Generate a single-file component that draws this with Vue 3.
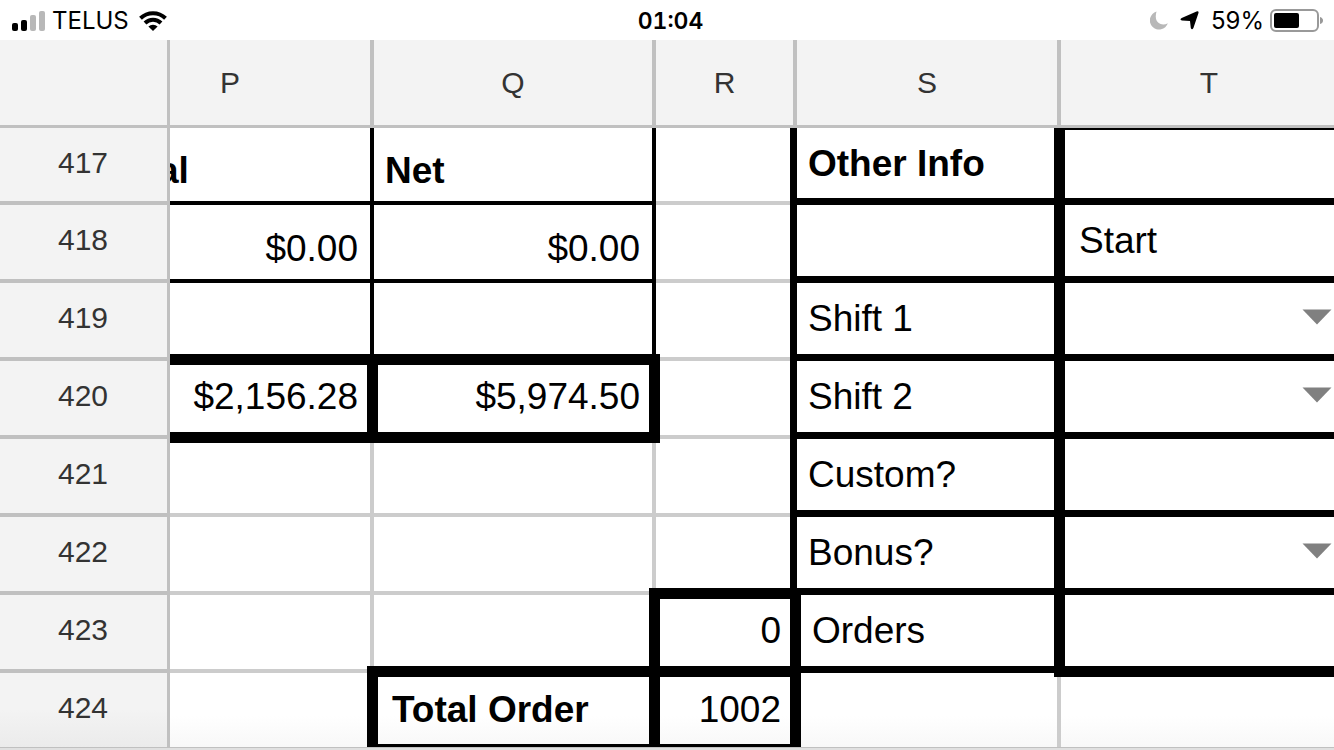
<template>
  <div class="screen">
    <header class="status-bar">
      <div class="status-side">
        <svg class="signal" width="34" height="20" viewBox="0 0 34 20" role="img" aria-label="Signal">
          <rect x="0" y="12" width="6" height="8" rx="2" />
          <rect x="9" y="9" width="6" height="11" rx="2" />
          <rect class="weak" x="18" y="4" width="6" height="16" rx="2" />
          <rect class="weak" x="27" y="0" width="6" height="20" rx="2" />
        </svg>
        <span>TELUS</span>
        <svg class="wifi" width="28" height="20" viewBox="0 0 28 20" role="img" aria-label="Wi-Fi">
          <path d="M1.500 7.200a18 18 0 0 1 25 0" />
          <path d="M6 12a11.500 11.500 0 0 1 16 0" />
          <path class="dot" d="M14 20l-4.600-4.400a6.600 6.600 0 0 1 9.200 0z" />
        </svg>
      </div>
      <span class="clock">01:04</span>
      <div class="status-side right">
        <svg class="moon" width="18" height="19" viewBox="0 0 18 19" role="img" aria-label="Do not disturb">
          <path d="M6.500 0.500q-2.500 9.500 3.500 12.300 4 1.700 7.800-.6a9.200 9.200 0 1 1-11.300-11.700z" />
        </svg>
        <svg class="location" width="19" height="19" viewBox="0 0 19 19" role="img" aria-label="Location">
          <path d="M16.500 0.400q2.600-.8 1.900 1.900L13.400 17q-1.500 2.600-2.600-.1L10 10 2 9.500q-2.900-.8-.3-2.500z" />
        </svg>
        <span>59%</span>
        <svg width="53" height="23" viewBox="0 0 53 23" role="img" aria-label="Battery">
          <rect class="case" x="1" y="1" width="47" height="21" rx="5" />
          <rect x="4" y="4" width="25" height="15" rx="2" />
          <path class="cap" d="M50 8q3 1 3 3.500t-3 3.500z" />
        </svg>
      </div>
    </header>

    <main class="sheet">
      <table>
        <colgroup>
          <col class="col-num" />
          <col class="col-p" />
          <col class="col-q" />
          <col class="col-r" />
          <col class="col-s" />
          <col />
        </colgroup>
        <thead>
          <tr>
            <th class="corner"></th>
            <th v-for="name in columns" :key="name" scope="col" :class="{ scrolled: name === 'P' }">{{ name }}</th>
          </tr>
        </thead>
        <tbody>
          <tr v-for="row in rows" :key="row.num">
            <th scope="row">{{ row.num }}</th>
            <td v-for="(cell, i) in row.cells" :key="i" :class="cell.css">
              <div v-if="cell.select" class="picker">
                <select :aria-label="cell.select"></select>
                <svg width="30" height="16" viewBox="0 0 30 16" aria-hidden="true">
                  <path d="M0.500 0.500h29L15 15.500z" />
                </svg>
              </div>
              <div v-else class="text">{{ cell.text }}</div>
            </td>
          </tr>
        </tbody>
      </table>
    </main>
    <footer class="edge"></footer>
  </div>
</template>

<script setup>
const columns = ['P', 'Q', 'R', 'S', 'T'];

const cell = (css = '', text = '') => ({ css, text });
const picker = (css, label) => ({ css, select: label });

// r/b/l/t = side, 1 = thin, 2 = medium, 3 = thick
// join-* fills the corner where thick lines of neighbouring cells meet
const rows = [
  {
    num: 417,
    cells: [
      cell('r1 b1 bold low cut', 'al'),
      cell('r1 b1 bold low', 'Net'),
      cell('r2'),
      cell('r3 b2 bold', 'Other Info'),
      cell('l3 t1 b2')
    ]
  },
  {
    num: 418,
    cells: [
      cell('r1 b1 number low', '$0.00'),
      cell('r1 b1 number low', '$0.00'),
      cell('r2'),
      cell('r3 b2'),
      cell('l3 b2 indent', 'Start')
    ]
  },
  {
    num: 419,
    cells: [
      cell('r1 b3'),
      cell('r1 b3'),
      cell('r2 join-bl'),
      cell('r3 b2', 'Shift 1'),
      picker('l3 b2', 'Shift 1 start')
    ]
  },
  {
    num: 420,
    cells: [
      cell('t3 r3 b3 number', '$2,156.28'),
      cell('t3 l3 r3 b3 number', '$5,974.50'),
      cell('l3 r2'),
      cell('r3 b2', 'Shift 2'),
      picker('l3 b2', 'Shift 2 start')
    ]
  },
  {
    num: 421,
    cells: [
      cell('t3'),
      cell('t3'),
      cell('r2 join-tl'),
      cell('r3 b2', 'Custom?'),
      cell('l3 b2')
    ]
  },
  {
    num: 422,
    cells: [
      cell(),
      cell('join-br'),
      cell('r2 b3'),
      cell('r3 b2', 'Bonus?'),
      picker('l3 b2', 'Bonus')
    ]
  },
  {
    num: 423,
    cells: [
      cell('join-br'),
      cell('r3 b3'),
      cell('t3 l3 r3 b3 number', '0'),
      cell('l3 r3 b2 shifted', 'Orders'),
      cell('l3 b3')
    ]
  },
  {
    num: 424,
    cells: [
      cell('r3'),
      cell('t3 l3 r3 b3 bold indent', 'Total Order'),
      cell('t3 l3 r3 b3 number', '1002'),
      cell('l3 join-tr'),
      cell('t3')
    ]
  }
];
</script>

<style>
body {
  margin: 0;
}
</style>

<style scoped>
.screen {
  display: flex;
  flex-direction: column;
  height: 100vh;
  overflow: hidden;
  background: #fff;
  color: #000;
  font-family: "Liberation Sans", Arial, sans-serif;
}

.status-bar {
  display: flex;
  align-items: center;
  flex: none;
  box-sizing: border-box;
  height: 40px;
  padding: 1px 11px 0 12px;
  font-family: Inter, sans-serif;
  font-size: 24px;
}

.status-side {
  display: flex;
  align-items: center;
  flex: 1;
  gap: 6px;
}

.status-side.right {
  justify-content: flex-end;
}

.weak,
.moon {
  fill: #b8b8b8;
}

.wifi {
  margin-left: 4px;
  fill: none;
  stroke: #000;
  stroke-width: 4;
}

.wifi .dot {
  fill: #000;
  stroke: none;
}

.clock {
  padding-left: 6px;
  font-size: 23px;
  font-weight: 600;
  font-variant-numeric: tabular-nums;
}

.location {
  margin: 0 6px;
}

.case {
  fill: none;
  stroke: #999;
  stroke-width: 2;
}

.cap {
  fill: #999;
}

.sheet {
  flex: 1;
  min-height: 0;
  overflow: hidden;
}

table {
  width: max(100%, 1361px);
  table-layout: fixed;
  border-spacing: 0;
}

.col-num {
  width: 170px;
}

.col-p {
  width: 204px;
}

.col-q {
  width: 282px;
}

.col-r {
  width: 141px;
}

.col-s {
  width: 264px;
}

th {
  box-sizing: border-box;
  padding: 0;
  background: #f3f3f3;
  color: #333;
  font-size: 30px;
  font-weight: 400;
}

thead th {
  height: 88px;
  border-right: 4px solid #c0c0c0;
  border-bottom: 3px solid #c0c0c0;
}

thead .corner {
  border-right-width: 3px;
}

.scrolled {
  padding-right: 80px;
}

tbody th {
  padding: 0 1px 4px 0;
  border-right: 3px solid #c0c0c0;
  border-bottom: 4px solid #c0c0c0;
}

/* cell lines are background layers, so they take no room and meet squarely */
td {
  --top: 0px;
  --left: 0px;
  --right: 4px;
  --bottom: 4px;
  --right-color: #ccc;
  --bottom-color: #ccc;
  --join: 0 0;
  --join-at: left top;
  --fade: #fff;
  box-sizing: border-box;
  height: 78px;
  padding: 0 16px 6px 11px;
  background:
    linear-gradient(#000, #000) var(--join-at) / var(--join) no-repeat,
    linear-gradient(#000, #000) top / 100% var(--top) no-repeat,
    linear-gradient(#000, #000) left / var(--left) 100% no-repeat,
    linear-gradient(var(--right-color), var(--right-color)) right / var(--right) 100% no-repeat,
    linear-gradient(var(--bottom-color), var(--bottom-color)) bottom / 100% var(--bottom) no-repeat,
    linear-gradient(#fff 55%, var(--fade));
  font-size: 37px;
  line-height: 42px;
  white-space: nowrap;
}

tbody tr:first-child td {
  height: 77px;
}

tbody tr:last-child td {
  --fade: #f7f7f7;
  padding-bottom: 4px;
}

tbody tr:last-child th {
  background: linear-gradient(#f3f3f3 50%, #ebebeb);
}

.t1 {
  --top: 2px;
}

.t3 {
  --top: 4px;
}

.l3 {
  --left: 4px;
}

.r1,
.r2,
.r3 {
  --right-color: #000;
}

.r2,
.r3 {
  --right: 7px;
}

.b1,
.b2,
.b3 {
  --bottom-color: #000;
}

.b2,
.b3 {
  --bottom: 7px;
}

.join-bl {
  --join: 4px 7px;
  --join-at: left bottom;
}

.join-tl {
  --join: 4px 4px;
}

.join-br {
  --join: 7px 7px;
  --join-at: right bottom;
}

.join-tr {
  --join: 7px 4px;
  --join-at: right top;
}

.bold {
  font-weight: 700;
}

.number {
  text-align: right;
}

.low {
  padding-top: 9px;
  padding-bottom: 0;
}

.shifted {
  padding-left: 15px;
}

.indent {
  padding-left: 18px;
}

.cut {
  padding-left: 0;
}

.cut .text {
  overflow: hidden;
  text-indent: -12px;
}

.picker {
  display: flex;
  align-items: center;
}

.picker select {
  flex: 1;
  height: 42px;
  border: 0;
  background: transparent;
  appearance: none;
}

.picker svg {
  margin: 0 13px 4px 0;
  fill: #808080;
}

.edge {
  flex: none;
  height: 2px;
  border-top: 1px solid #c0c0c0;
  background: #e0e0e0;
}
</style>
